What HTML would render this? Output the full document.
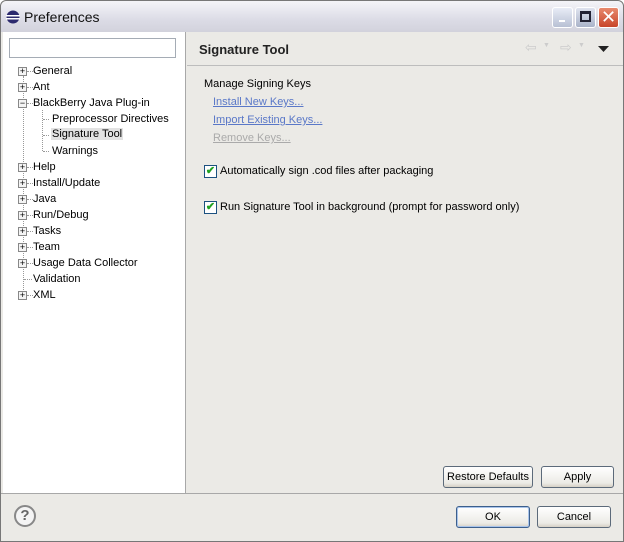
<!DOCTYPE html>
<html><head><style>
*{margin:0;padding:0;box-sizing:border-box}
body{width:624px;height:542px;overflow:hidden;background:#fff;font-family:"Liberation Sans",sans-serif;font-size:11px;color:#000;position:relative}
.win{position:absolute;left:0;top:0;width:624px;height:542px;background:#ebeae6;border:1px solid #777;border-radius:6px 6px 0 0}
.title{position:absolute;left:0;top:0;width:622px;height:31px;background:linear-gradient(#f4f4f8,#dcdce6 60%,#d2d2dc);border-radius:6px 6px 0 0}
.title span{position:absolute;left:23px;top:8px;font-size:14px;color:#111}
.tb{position:absolute;top:6px;width:21px;height:21px;border-radius:3px;border:1px solid #fff}
.left{position:absolute;left:2px;top:31px;width:183px;height:461px;background:#fff;border-right:1px solid #a8a8a8}
.search{position:absolute;left:8px;top:37px;width:167px;height:20px;border:1px solid #a5acb5;background:#fff}
.item{position:absolute;font-size:11px;color:#000;white-space:nowrap}
.pm{position:absolute;width:9px;height:9px;border:1px solid #888;background:#f4f4f4;font-size:9px;line-height:7px;text-align:center;color:#000}
.dot{position:absolute;border-top:1px dotted #999;width:6px}
.hdr{position:absolute;left:186px;top:31px;width:436px;height:34px;border-bottom:1px solid #bdbdbd}
.hdr b{position:absolute;left:12px;top:10px;font-size:13px;color:#222}
.link{position:absolute;left:212px;color:#5a78c8;text-decoration:underline;white-space:nowrap}
.cb{position:absolute;left:203px;width:13px;height:13px;border:1px solid #1c5180;background:#fff;color:#21a121;font-size:11px;line-height:11px;text-align:center;font-weight:bold}
.btn{position:absolute;height:22px;border:1px solid #5c6a7a;border-radius:3px;background:linear-gradient(#fff,#ecebe6 80%,#d6d0c5);text-align:center;line-height:20px;font-size:11px;white-space:nowrap}
</style></head><body>
<div class="win">
<div class="title"><span>Preferences</span>
<svg style="position:absolute;left:5px;top:9px" width="14" height="14"><circle cx="7" cy="7" r="6.5" fill="#2c2a6e"/><rect x="0" y="5" width="14" height="1.5" fill="#fff"/><rect x="0" y="8" width="14" height="1.5" fill="#fff"/></svg>
<div class="tb" style="left:551px;background:linear-gradient(#e8ecf6,#b8c0d4);border-color:#fff"><div style="position:absolute;left:6px;top:12px;width:6px;height:2px;background:#fff"></div></div>
<div class="tb" style="left:574px;background:linear-gradient(#dfe3ef,#aab3c9)"><div style="position:absolute;left:4px;top:3px;width:11px;height:11px;border:2px solid #223;border-top-width:3px"></div></div>
<div class="tb" style="left:597px;background:linear-gradient(#e88a6e,#c8452a);color:#fff;font-size:18px;line-height:19px;text-align:center">✕</div>
</div>
<div class="left"></div>
<div class="search"></div>
<div style="position:absolute;left:22px;top:75px;height:220px;border-left:1px dotted #999"></div>
<div style="position:absolute;left:41px;top:109px;height:41px;border-left:1px dotted #999"></div>

<div class="pm" style="left:17px;top:66px">+</div><div class="dot" style="left:26px;top:70px"></div><div class="item" style="left:32px;top:64px">General</div>
<div class="pm" style="left:17px;top:82px">+</div><div class="dot" style="left:26px;top:86px"></div><div class="item" style="left:32px;top:80px">Ant</div>
<div class="pm" style="left:17px;top:98px">−</div><div class="dot" style="left:26px;top:102px"></div><div class="item" style="left:32px;top:96px">BlackBerry Java Plug-in</div>
<div class="dot" style="left:42px;top:118px"></div><div class="item" style="left:51px;top:112px">Preprocessor Directives</div>
<div class="dot" style="left:42px;top:134px"></div><div class="item" style="left:50px;top:127px;background:#e2e2e2;padding:0 1px">Signature Tool</div>
<div class="dot" style="left:42px;top:150px"></div><div class="item" style="left:51px;top:144px">Warnings</div>
<div class="pm" style="left:17px;top:162px">+</div><div class="dot" style="left:26px;top:166px"></div><div class="item" style="left:32px;top:160px">Help</div>
<div class="pm" style="left:17px;top:178px">+</div><div class="dot" style="left:26px;top:182px"></div><div class="item" style="left:32px;top:176px">Install/Update</div>
<div class="pm" style="left:17px;top:194px">+</div><div class="dot" style="left:26px;top:198px"></div><div class="item" style="left:32px;top:192px">Java</div>
<div class="pm" style="left:17px;top:210px">+</div><div class="dot" style="left:26px;top:214px"></div><div class="item" style="left:32px;top:208px">Run/Debug</div>
<div class="pm" style="left:17px;top:226px">+</div><div class="dot" style="left:26px;top:230px"></div><div class="item" style="left:32px;top:224px">Tasks</div>
<div class="pm" style="left:17px;top:242px">+</div><div class="dot" style="left:26px;top:246px"></div><div class="item" style="left:32px;top:240px">Team</div>
<div class="pm" style="left:17px;top:258px">+</div><div class="dot" style="left:26px;top:262px"></div><div class="item" style="left:32px;top:256px">Usage Data Collector</div>
<div class="dot" style="left:23px;top:278px;width:8px"></div><div class="item" style="left:32px;top:272px">Validation</div>
<div class="pm" style="left:17px;top:290px">+</div><div class="dot" style="left:26px;top:294px"></div><div class="item" style="left:32px;top:288px">XML</div>

<div class="hdr"><b>Signature Tool</b>
<span style="position:absolute;left:338px;top:7px;color:#ccc;font-size:14px">⇦</span><span style="position:absolute;left:356px;top:10px;color:#ccc;font-size:7px">▼</span>
<span style="position:absolute;left:373px;top:7px;color:#ccc;font-size:14px">⇨</span><span style="position:absolute;left:391px;top:10px;color:#ccc;font-size:7px">▼</span>
<svg style="position:absolute;left:411px;top:14px" width="11" height="7"><path d="M0 0H11L5.5 6Z" fill="#222"/></svg>
</div>
<div class="item" style="left:203px;top:77px">Manage Signing Keys</div>
<div class="link" style="top:95px">Install New Keys...</div>
<div class="link" style="top:113px">Import Existing Keys...</div>
<div class="link" style="top:131px;color:#aaa">Remove Keys...</div>
<div class="cb" style="top:164px">✔</div><div class="item" style="left:219px;top:164px">Automatically sign .cod files after packaging</div>
<div class="cb" style="top:200px">✔</div><div class="item" style="left:219px;top:200px">Run Signature Tool in background (prompt for password only)</div>

<div class="btn" style="left:442px;top:465px;width:90px">Restore Defaults</div>
<div class="btn" style="left:540px;top:465px;width:73px">Apply</div>
<div style="position:absolute;left:0;top:492px;width:622px;border-top:1px solid #a8a8a8"></div>
<div style="position:absolute;left:13px;top:504px;width:22px;height:22px;border-radius:50%;border:2px solid #888;background:#f4f4f4;color:#666;font-weight:bold;font-size:15px;line-height:18px;text-align:center">?</div>
<div class="btn" style="left:455px;top:505px;width:74px;border-color:#3c5f8c;box-shadow:inset 0 0 0 1px #a9c4ea">OK</div>
<div class="btn" style="left:536px;top:505px;width:74px">Cancel</div>
</div>
</body></html>
